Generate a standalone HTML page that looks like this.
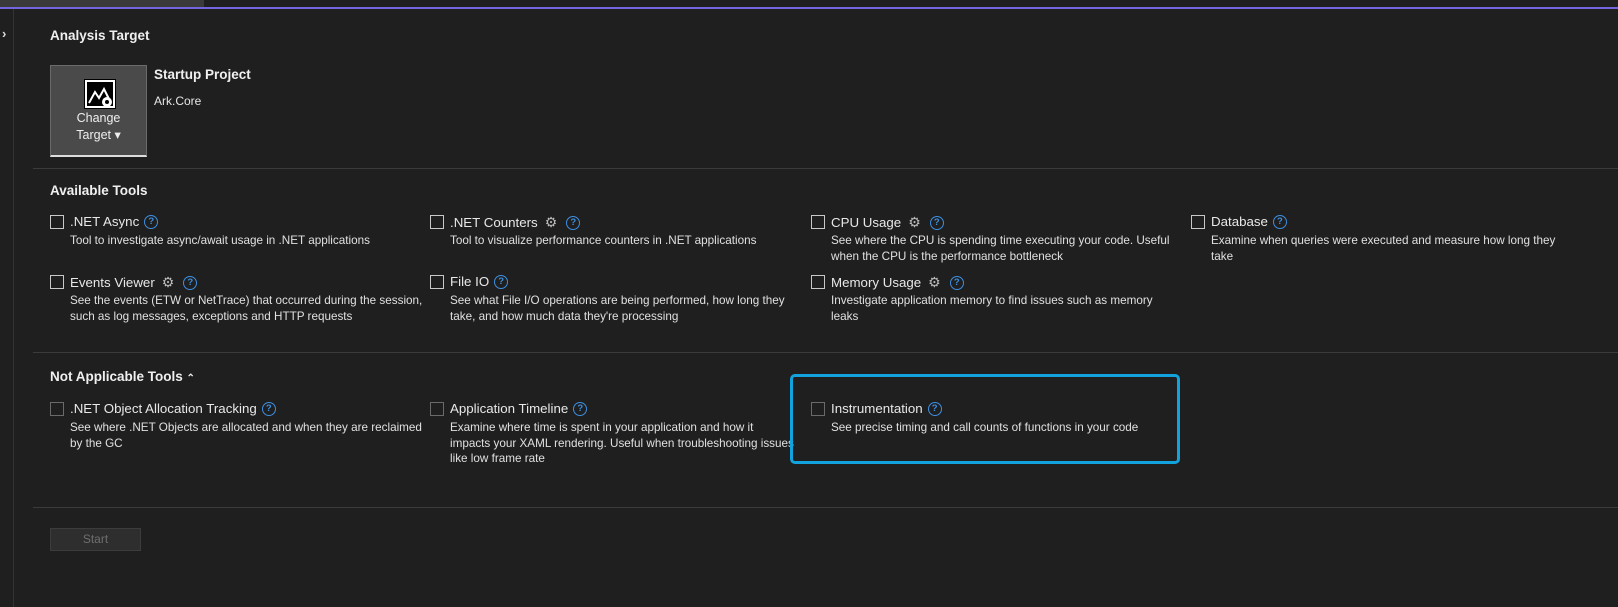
<!DOCTYPE html>
<html><head><meta charset="utf-8"><style>
*{margin:0;padding:0;box-sizing:border-box}
body{width:1618px;height:607px;background:#1f1f1f;color:#e6e6e6;font-family:"Liberation Sans",sans-serif;position:relative;overflow:hidden}
.a{position:absolute}
.h{font-size:13.5px;font-weight:bold;color:#f0f0f0}
.sep{position:absolute;left:33px;right:0;height:1px;background:#3b3b3b}
.tool{position:absolute;width:375px}
.cb{position:absolute;left:0;top:2px;width:14px;height:14px;border:1px solid #c8c8c8}
.dis .cb{border-color:#6a6a6a}
.t{position:absolute;left:20px;top:0;font-size:13.3px;white-space:nowrap;line-height:18px;color:#e8e8e8}
.d{position:absolute;left:20px;top:20px;font-size:11.7px;line-height:15.5px;color:#e0e0e0;width:350px}
.q{display:inline-block;position:relative;top:-3px;width:14px;height:14px;border:1.3px solid #3d8fe0;border-radius:50%;color:#3d8fe0;font-size:9.5px;line-height:12px;text-align:center;vertical-align:-1px;margin-left:5px;font-weight:bold}
.g{display:inline-block;color:#bbb;font-size:14px;margin-left:7px}
</style></head><body>
<div class="a" style="left:0;top:0;width:204px;height:7px;background:#3a3a3a"></div>
<div class="a" style="left:0;top:7px;width:1618px;height:2px;background:#7464e0"></div>
<div class="a" style="left:13px;top:9px;width:1px;height:598px;background:#333"></div>
<div class="a" style="left:2px;top:26px;color:#ddd;font-size:13px;font-weight:bold">›</div>

<div class="a h" style="left:50px;top:28px">Analysis Target</div>
<div class="a" style="left:50px;top:65px;width:97px;height:92px;background:#4a4a4a;border:1px solid #6a6a6a;border-bottom:2px solid #ddd">
 <svg class="a" style="left:33px;top:13px" width="32" height="30" viewBox="0 0 32 30">
  <rect x="0" y="0" width="32" height="30" fill="#000"/>
  <rect x="2" y="2" width="28" height="26" fill="none" stroke="#fff" stroke-width="2"/>
  <path d="M5 24 L11 13 L15 19 L20 10 L26 22" fill="none" stroke="#fff" stroke-width="2"/>
  <circle cx="23" cy="23" r="5" fill="#fff"/><circle cx="23" cy="23" r="2" fill="#000"/>
 </svg>
 <div class="a" style="left:0;width:95px;top:44px;text-align:center;font-size:12.5px;line-height:17px;color:#eee">Change<br>Target ▾</div>
</div>
<div class="a" style="left:154px;top:67px;font-size:13.5px;font-weight:bold;color:#f0f0f0">Startup Project</div>
<div class="a" style="left:154px;top:94px;font-size:12px;color:#e6e6e6">Ark.Core</div>

<div class="sep" style="top:168px"></div>
<div class="a h" style="left:50px;top:183px">Available Tools</div>

<div class="tool" style="left:50px;top:213px"><div class="cb"></div><div class="t">.NET Async<span class="q">?</span></div><div class="d">Tool to investigate async/await usage in .NET applications</div></div>
<div class="tool" style="left:430px;top:213px"><div class="cb"></div><div class="t">.NET Counters<span class="g">⚙</span><span class="q" style="margin-left:9px">?</span></div><div class="d">Tool to visualize performance counters in .NET applications</div></div>
<div class="tool" style="left:811px;top:213px"><div class="cb"></div><div class="t">CPU Usage<span class="g">⚙</span><span class="q" style="margin-left:9px">?</span></div><div class="d">See where the CPU is spending time executing your code. Useful when the CPU is the performance bottleneck</div></div>
<div class="tool" style="left:1191px;top:213px"><div class="cb"></div><div class="t">Database<span class="q">?</span></div><div class="d">Examine when queries were executed and measure how long they take</div></div>

<div class="tool" style="left:50px;top:273px"><div class="cb"></div><div class="t">Events Viewer<span class="g">⚙</span><span class="q" style="margin-left:9px">?</span></div><div class="d" style="width:362px">See the events (ETW or NetTrace) that occurred during the session, such as log messages, exceptions and HTTP requests</div></div>
<div class="tool" style="left:430px;top:273px"><div class="cb"></div><div class="t">File IO<span class="q">?</span></div><div class="d">See what File I/O operations are being performed, how long they take, and how much data they're processing</div></div>
<div class="tool" style="left:811px;top:273px"><div class="cb"></div><div class="t">Memory Usage<span class="g">⚙</span><span class="q" style="margin-left:9px">?</span></div><div class="d" style="width:340px">Investigate application memory to find issues such as memory leaks</div></div>

<div class="sep" style="top:352px"></div>
<div class="a h" style="left:50px;top:369px">Not Applicable Tools <span style="font-size:10px">⌃</span></div>

<div class="tool dis" style="left:50px;top:400px"><div class="cb"></div><div class="t">.NET Object Allocation Tracking<span class="q">?</span></div><div class="d" style="width:362px">See where .NET Objects are allocated and when they are reclaimed by the GC</div></div>
<div class="tool dis" style="left:430px;top:400px"><div class="cb"></div><div class="t">Application Timeline<span class="q">?</span></div><div class="d" style="width:350px">Examine where time is spent in your application and how it<br>impacts your XAML rendering. Useful when troubleshooting issues like low frame rate</div></div>
<div class="tool dis" style="left:811px;top:400px"><div class="cb"></div><div class="t">Instrumentation<span class="q">?</span></div><div class="d">See precise timing and call counts of functions in your code</div></div>

<div class="a" style="left:790px;top:374px;width:390px;height:90px;border:3px solid #12a3de;border-radius:5px"></div>

<div class="sep" style="top:507px"></div>
<div class="a" style="left:50px;top:528px;width:91px;height:23px;background:#2e2e2e;border:1px solid #3c3c3c;color:#6e6e6e;font-size:12px;text-align:center;line-height:21px">Start</div>
</body></html>
